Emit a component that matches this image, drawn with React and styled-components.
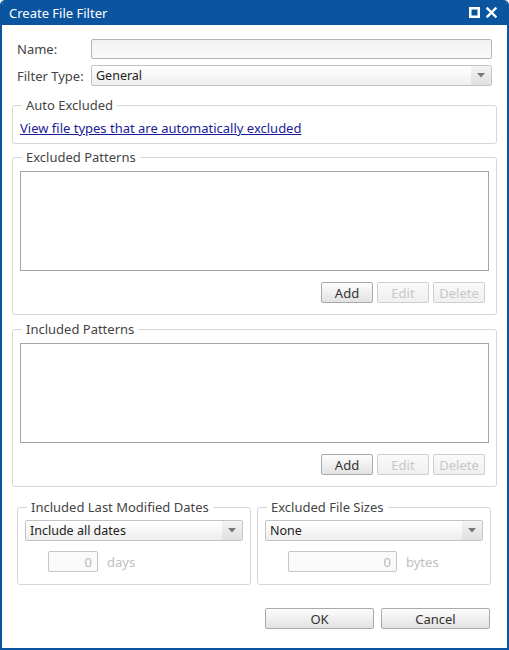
import React from "react";
import styled, { createGlobalStyle } from "styled-components";

const GlobalStyle = createGlobalStyle`
  html, body {
    margin: 0;
    padding: 0;
    background: #ffffff;
  }
  * {
    box-sizing: border-box;
  }
`;

const FONT = `"Noto Sans", "Open Sans", "DejaVu Sans", sans-serif`;

const Window = styled.div`
  width: 509px;
  height: 650px;
  display: flex;
  flex-direction: column;
  background: #ffffff;
  border: 2px solid #0b55a0;
  border-top: none;
  border-radius: 5px 5px 0 0;
  overflow: hidden;
  font-family: ${FONT};
  font-size: 13px;
  color: #444;
`;

const TitleBar = styled.div`
  height: 25px;
  flex: none;
  display: flex;
  align-items: center;
  justify-content: space-between;
  background: #0b55a0;
  color: #ffffff;
  margin: 0 -2px;
  padding: 0 12px 0 9px;
  font-size: 13px;
`;

const TitleTools = styled.div`
  display: flex;
  align-items: center;
  gap: 6px;
`;

const Body = styled.div`
  flex: 1;
  display: flex;
  flex-direction: column;
  padding: 14px 10px 0 10px;
`;

const FormRow = styled.div`
  display: flex;
  align-items: center;
  margin: 0 5px ${(p) => p.$gap || 0}px 5px;
`;

const Label = styled.label`
  width: 74px;
  flex: none;
  color: #444;
`;

const TextInput = styled.div`
  flex: 1;
  height: 20px;
  border: 1px solid #b5b5b5;
  border-radius: 2px;
  background: linear-gradient(#f1f1f1, #fafafa);
`;

const Select = styled.div`
  flex: 1;
  height: 21px;
  display: flex;
  align-items: center;
  border: 1px solid #c4c4c4;
  border-radius: 2px;
  background: linear-gradient(#ffffff, #eeeeee);
  color: #222;
  font-size: 12.5px;
  padding-left: 4px;
`;

const SelectText = styled.span`
  flex: 1;
`;

const Arrow = styled.span`
  width: 20px;
  height: 100%;
  display: flex;
  align-items: center;
  justify-content: center;
  background: linear-gradient(#f4f4f4, #e0e0e0);
`;

const Group = styled.fieldset`
  margin: ${(p) => p.$top || 0}px 0 0;
  padding: ${(p) => p.$pad || "6px 7px 11px"};
  border: 1px solid #d6d6d6;
  border-radius: 3px;
  min-width: 0;
  flex: ${(p) => (p.$grow ? 1 : "none")};
`;

const Legend = styled.legend`
  padding: 0 4px;
  margin-left: 2px;
  line-height: 16px;
  color: #444;
`;

const Link = styled.a`
  display: block;
  width: max-content;
  color: #1b1b9a;
  text-decoration: underline;
  line-height: 16px;
  cursor: pointer;
`;

const ListBox = styled.div`
  height: 100px;
  border: 1px solid #a6a6a6;
  background: #ffffff;
`;

const ButtonRow = styled.div`
  display: flex;
  justify-content: flex-end;
  gap: ${(p) => p.$gap || 4}px;
  margin: ${(p) => p.$margin || "11px 4px 0 0"};
`;

const Button = styled.button`
  width: ${(p) => p.$w || 52}px;
  height: 21px;
  padding: 0;
  font-family: ${FONT};
  font-size: 13px;
  color: ${(p) => (p.disabled ? "#c8c8c8" : "#333")};
  border: 1px solid ${(p) => (p.disabled ? "#cfcfcf" : "#a9a9a9")};
  border-radius: 2px;
  background: ${(p) =>
    p.disabled
      ? "linear-gradient(#fafafa, #f0f0f0)"
      : "linear-gradient(#fdfdfd, #e2e2e2)"};
`;

const Columns = styled.div`
  display: flex;
  gap: 6px;
  margin: 12px 6px 0 5px;
`;

const NumberRow = styled.div`
  display: flex;
  align-items: center;
  gap: 9px;
  margin: 10px 0 0 23px;
  color: #c0c0c0;
`;

const NumberInput = styled.div`
  width: ${(p) => p.$w}px;
  height: 21px;
  display: flex;
  align-items: center;
  justify-content: flex-end;
  padding-right: 5px;
  border: 1px solid #c6c6c6;
  border-radius: 2px;
  background: #fafafa;
  color: #b8b8b8;
`;

const ArrowIcon = () => (
  <svg width="8" height="5" viewBox="0 0 8 5">
    <path d="M0 0 H8 L4 4.5 Z" fill="#777" />
  </svg>
);

const MaxIcon = () => (
  <svg width="11" height="11" viewBox="0 0 11 11">
    <rect x="1.25" y="1.25" width="8.5" height="8.5" fill="none" stroke="#fff" strokeWidth="2.5" />
  </svg>
);

const CloseIcon = () => (
  <svg width="11" height="11" viewBox="0 0 11 11">
    <path d="M1.5 1.5 L9.5 9.5 M9.5 1.5 L1.5 9.5" stroke="#fff" strokeWidth="2.4" strokeLinecap="square" />
  </svg>
);

const DropDown = ({ value }) => (
  <Select>
    <SelectText>{value}</SelectText>
    <Arrow>
      <ArrowIcon />
    </Arrow>
  </Select>
);

const PatternGroup = ({ title, top }) => (
  <Group $top={top}>
    <Legend>{title}</Legend>
    <ListBox />
    <ButtonRow>
      <Button>Add</Button>
      <Button disabled>Edit</Button>
      <Button disabled>Delete</Button>
    </ButtonRow>
  </Group>
);

const App = () => {
  return (
    <>
      <GlobalStyle />
      <Window>
        <TitleBar>
          <span>Create File Filter</span>
          <TitleTools>
            <MaxIcon />
            <CloseIcon />
          </TitleTools>
        </TitleBar>
        <Body>
          <FormRow $gap={6}>
            <Label>Name:</Label>
            <TextInput />
          </FormRow>
          <FormRow>
            <Label>Filter Type:</Label>
            <DropDown value="General" />
          </FormRow>

          <Group $top={11} $pad="7px 7px 7px">
            <Legend>Auto Excluded</Legend>
            <Link>View file types that are automatically excluded</Link>
          </Group>

          <PatternGroup title="Excluded Patterns" top={5} />
          <PatternGroup title="Included Patterns" top={6} />

          <Columns>
            <Group $grow $pad="5px 7px 12px">
              <Legend>Included Last Modified Dates</Legend>
              <DropDown value="Include all dates" />
              <NumberRow>
                <NumberInput $w={50}>0</NumberInput>
                <span>days</span>
              </NumberRow>
            </Group>
            <Group $grow $pad="5px 7px 12px">
              <Legend>Excluded File Sizes</Legend>
              <DropDown value="None" />
              <NumberRow>
                <NumberInput $w={109}>0</NumberInput>
                <span>bytes</span>
              </NumberRow>
            </Group>
          </Columns>

          <ButtonRow $gap={7} $margin="23px 7px 0 0">
            <Button $w={109}>OK</Button>
            <Button $w={109}>Cancel</Button>
          </ButtonRow>
        </Body>
      </Window>
    </>
  );
};

export default App;
